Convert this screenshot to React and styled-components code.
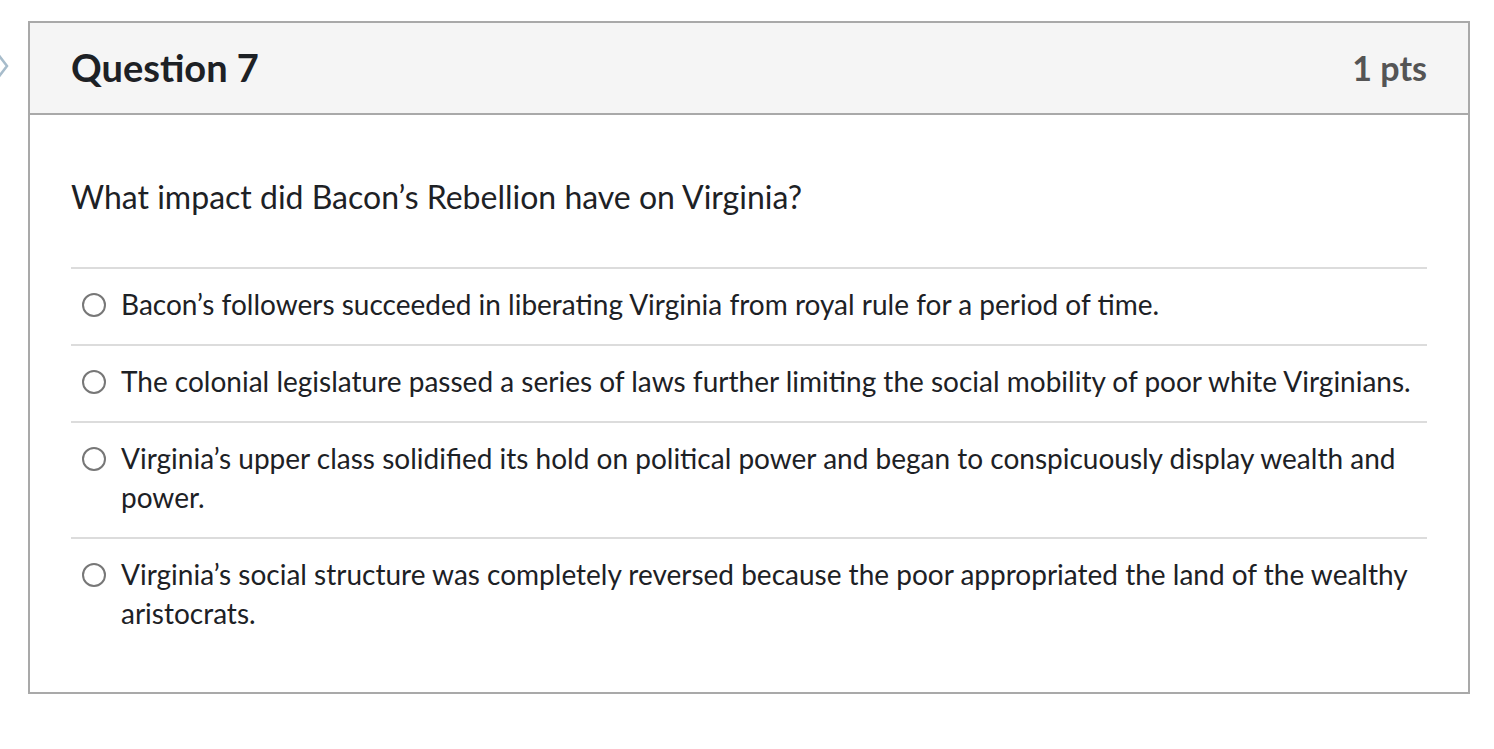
import React from 'react';
import styled, { createGlobalStyle } from 'styled-components';

const Global = createGlobalStyle`
  body {
    margin: 0;
    background: #fff;
    font-family: Lato, "Liberation Sans", sans-serif;
    color: #2d3b45;
  }
`;

const Page = styled.div`
  position: relative;
  padding: 21px 24px 0 28px;
`;

const Chevron = styled.svg`
  position: absolute;
  left: -6px;
  top: 50px;
`;

const Card = styled.div`
  border: 2px solid #a9a9a9;
  width: 1438px;
  box-sizing: content-box;
`;

const Header = styled.div`
  display: flex;
  align-items: center;
  justify-content: space-between;
  height: 90px;
  padding: 0 41px;
  background: #f5f5f5;
  border-bottom: 2px solid #a9a9a9;
`;

const Title = styled.h2`
  margin: 0 0 2px;
  font-size: 38px;
  font-weight: 700;
  color: #1d2125;
`;

const Points = styled.span`
  margin-bottom: 2px;
  font-size: 34px;
  font-weight: 700;
  color: #555;
`;

const Body = styled.div`
  padding: 62px 41px 39px;
`;

const Prompt = styled.p`
  margin: 0 0 50px;
  font-size: 32px;
  line-height: 40px;
  color: #1d2125;
`;

const Answers = styled.div`
  display: flex;
  flex-direction: column;
`;

const Answer = styled.label`
  display: flex;
  align-items: flex-start;
  gap: 15px;
  padding: 16px 10px 20px 11px;
  border-top: 2px solid #dcdcdc;
`;

const Radio = styled.span`
  flex: 0 0 auto;
  width: 24px;
  height: 24px;
  margin-top: 8px;
  border: 2px solid #777;
  border-radius: 50%;
  box-sizing: border-box;
  background: #fff;
`;

const AnswerText = styled.span`
  font-size: 28px;
  line-height: 39px;
  color: #1d2125;
`;

const answers = [
  'Bacon’s followers succeeded in liberating Virginia from royal rule for a period of time.',
  'The colonial legislature passed a series of laws further limiting the social mobility of poor white Virginians.',
  'Virginia’s upper class solidified its hold on political power and began to conspicuously display wealth and power.',
  'Virginia’s social structure was completely reversed because the poor appropriated the land of the wealthy aristocrats.',
];

export default function App() {
  return (
    <Page>
      <Global />
      <Chevron width="16" height="32" viewBox="0 0 16 32">
        <path d="M3 3 L13 16 L3 29" fill="none" stroke="#a7bccb" strokeWidth="2.5" />
      </Chevron>
      <Card>
        <Header>
          <Title>Question 7</Title>
          <Points>1 pts</Points>
        </Header>
        <Body>
          <Prompt>What impact did Bacon’s Rebellion have on Virginia?</Prompt>
          <Answers>
            {answers.map((a) => (
              <Answer key={a}>
                <Radio />
                <AnswerText>{a}</AnswerText>
              </Answer>
            ))}
          </Answers>
        </Body>
      </Card>
    </Page>
  );
}
